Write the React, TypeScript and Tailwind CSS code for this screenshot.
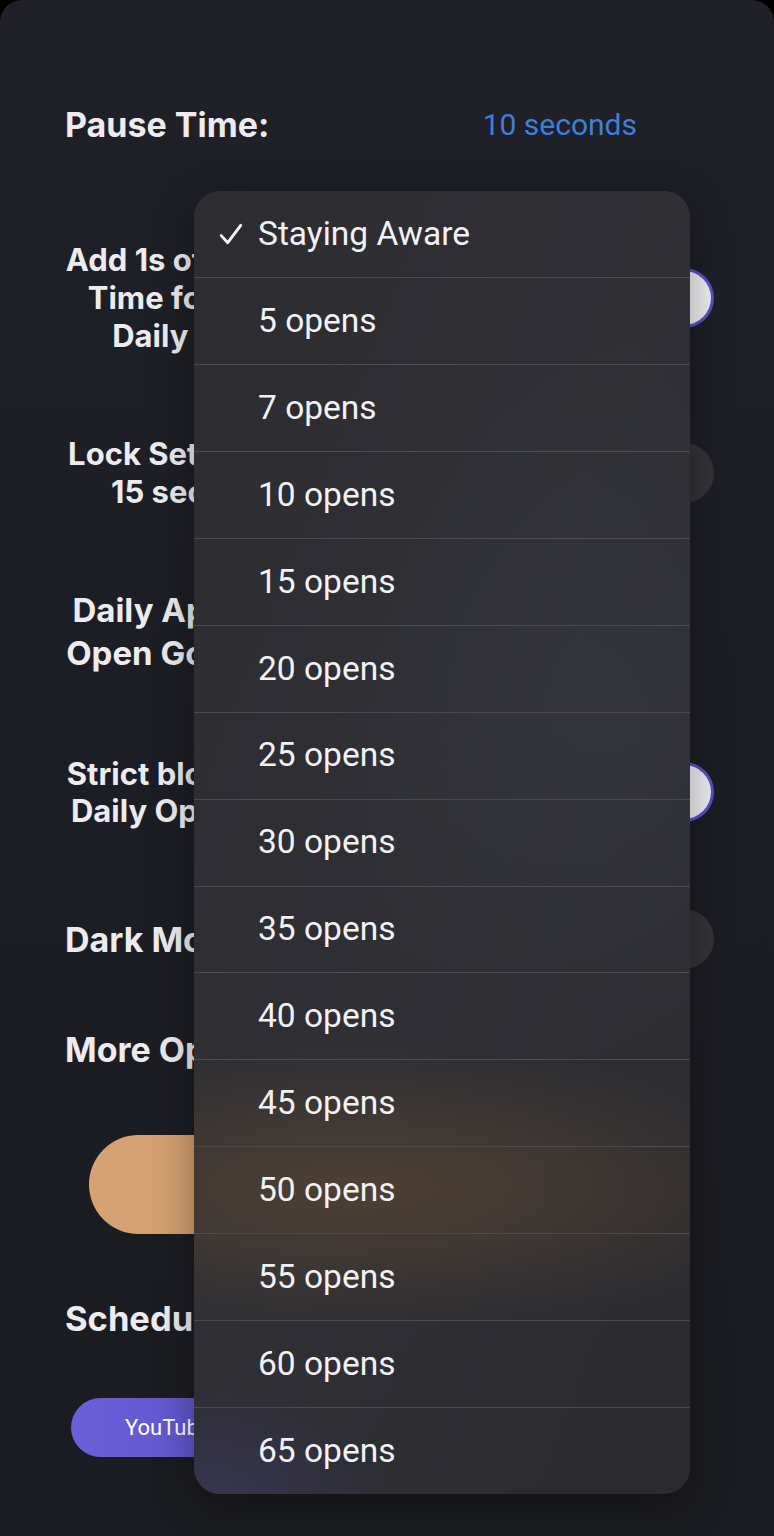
import React from "react";

const items = [
  "Staying Aware",
  "5 opens",
  "7 opens",
  "10 opens",
  "15 opens",
  "20 opens",
  "25 opens",
  "30 opens",
  "35 opens",
  "40 opens",
  "45 opens",
  "50 opens",
  "55 opens",
  "60 opens",
  "65 opens",
];

function Toggle({ on }: { on: boolean }) {
  return on ? (
    <div className="w-[110px] h-[60px] rounded-full bg-[#5a4fc6] p-[3px] flex justify-end shrink-0">
      <div className="w-[54px] h-[54px] rounded-full bg-[#eeeef2]" />
    </div>
  ) : (
    <div className="w-[110px] h-[60px] rounded-full bg-[#333338] p-[3px] flex justify-start shrink-0">
      <div className="w-[54px] h-[54px] rounded-full bg-[#55555b]" />
    </div>
  );
}

export default function App() {
  const label = "font-['Inter','Noto_Sans',sans-serif] font-bold text-[#ececf0]";
  return (
    <div className="w-[774px] h-[1536px] bg-black overflow-hidden relative">
      <div className="w-full h-full rounded-t-[22px] bg-gradient-to-b from-[#1f2028] via-[#1d1e25] to-[#1b1c21] pl-[65px] pr-[60px] pt-[94px] flex flex-col">
        {/* Pause time */}
        <div className="h-[60px] flex items-center justify-between pr-[77px]">
          <span className={`${label} text-[34px]`}>Pause Time:</span>
          <span className="font-['Roboto',sans-serif] text-[30px] text-[#3d7fdc]">10 seconds</span>
        </div>

        {/* Add 1s */}
        <div className="mt-[84px] h-[120px] flex items-center justify-between">
          <div className={`${label} text-[31px] leading-[38px] text-center w-[240px]`}>
            Add 1s of Pause
            <br />
            Time for Any
            <br />
            Daily App
          </div>
          <Toggle on={true} />
        </div>

        {/* Lock settings */}
        <div className="mt-[70px] h-[90px] flex items-center justify-between">
          <div className={`${label} text-[31px] leading-[38px] text-center w-[262px]`}>
            Lock Settings for
            <br />
            15 seconds
          </div>
          <Toggle on={false} />
        </div>

        {/* Daily app open goal */}
        <div className="mt-[69px] h-[90px] flex items-center justify-between">
          <div className={`${label} text-[33px] leading-[43px] text-center w-[190px] ml-[-10px]`}>
            Daily App
            <br />
            Open Goal
          </div>
        </div>

        {/* Strict block */}
        <div className="mt-[70px] h-[90px] flex items-center justify-between">
          <div className={`${label} text-[31px] leading-[37px] text-center w-[194px]`}>
            Strict blocks
            <br />
            Daily Opens
          </div>
          <Toggle on={true} />
        </div>

        {/* Dark mode */}
        <div className="mt-[72px] h-[60px] flex items-center justify-between">
          <span className={`${label} text-[34px]`}>Dark Mode</span>
          <Toggle on={false} />
        </div>

        {/* More options */}
        <div className="mt-[50px] h-[60px] flex items-center">
          <span className={`${label} text-[34px]`}>More Options</span>
        </div>

        <div className="mt-[56px] ml-[24px] w-[596px] h-[99px] rounded-full bg-gradient-to-r from-[#d6a273] to-[#c8956a]" />

        <div className="mt-[55px] h-[60px] flex items-center">
          <span className={`${label} text-[34.5px]`}>Schedule Blocking</span>
        </div>

        <div className="mt-[49px] ml-[6px] flex">
          <div className="h-[59px] rounded-full bg-gradient-to-r from-[#6b60d8] to-[#5c51c6] px-[54px] flex items-center font-['Roboto',sans-serif] text-[22px] text-white">
            YouTube
          </div>
        </div>
      </div>

      {/* Dropdown menu */}
      <div className="absolute left-[194px] top-[191px] w-[496px] h-[1303px] rounded-[26px] overflow-hidden bg-gradient-to-br from-[#2c2c31] via-[#2f2f35] to-[#2a2a2f] shadow-[0_10px_40px_rgba(0,0,0,0.35)]">
        <div className="absolute inset-0 bg-[radial-gradient(ellipse_95%_11%_at_35%_76.5%,rgba(100,75,50,0.6),transparent)]" />
        <div className="absolute inset-0 bg-[radial-gradient(ellipse_35%_8%_at_5%_100%,rgba(80,70,170,0.25),transparent)]" />
        <div className="absolute inset-0 bg-[radial-gradient(ellipse_60%_30%_at_85%_40%,rgba(70,70,85,0.25),transparent)]" />
        <div className="relative h-full flex flex-col">
          {items.map((it, i) => (
            <div
              key={it}
              className={`flex-1 flex items-center relative ${i > 0 ? "border-t border-[#4a4a50]" : ""}`}
            >
              {i === 0 && (
                <svg
                  className="absolute left-[24px] top-1/2 -translate-y-1/2"
                  width="26"
                  height="26"
                  viewBox="0 0 24 24"
                  fill="none"
                  stroke="#f2f2f5"
                  strokeWidth="2.7"
                  strokeLinecap="round"
                  strokeLinejoin="round"
                >
                  <path d="M3 13.5 L9 20 L21 4" />
                </svg>
              )}
              <span className="pl-[64px] font-['Roboto',sans-serif] text-[33.5px] text-[#f2f2f5]">{it}</span>
            </div>
          ))}
        </div>
      </div>
    </div>
  );
}
